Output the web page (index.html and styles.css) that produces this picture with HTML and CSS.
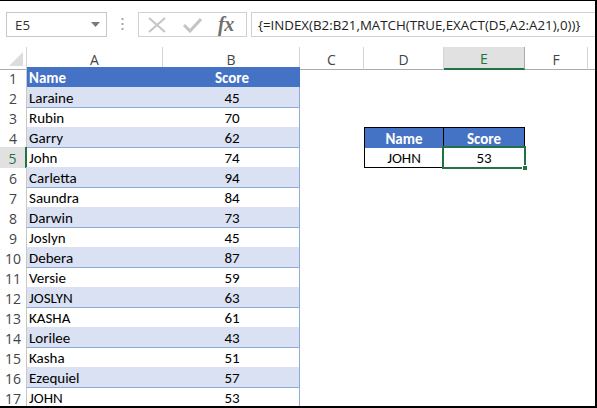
FILE: index.html
```html
<!DOCTYPE html>
<html>
<head>
<meta charset="utf-8">
<link rel="stylesheet" href="styles.css">
</head>
<body>
<div class="window">
  <div class="fbar">
    <div class="namebox"><span>E5</span>
      <svg class="arrow" width="9" height="5" viewBox="0 0 9 5"><path d="M0 0H9L4.5 5Z" fill="#7a7a7a"/></svg>
    </div>
    <div class="dots">
      <svg width="3" height="13" viewBox="0 0 3 13"><rect x="0.5" y="0" width="2" height="2" fill="#a6a6a6"/><rect x="0.5" y="5" width="2" height="2" fill="#a6a6a6"/><rect x="0.5" y="10" width="2" height="2" fill="#a6a6a6"/></svg>
    </div>
    <div class="fxbox">
      <svg class="ic-x" width="18" height="16" viewBox="0 0 18 16"><path d="M1 1L17 15M17 1L1 15" stroke="#c4c4c4" stroke-width="2" fill="none"/></svg>
      <svg class="ic-ok" width="19" height="16" viewBox="0 0 19 16"><path d="M1 8L7 14L18 2" stroke="#c4c4c4" stroke-width="3" fill="none"/></svg>
      <span class="fx">fx</span>
    </div>
    <div class="formula">{=INDEX(B2:B21,MATCH(TRUE,EXACT(D5,A2:A21),0))}</div>
  </div>

  <div class="sheet">
    <div class="row colhead">
      <div class="corner"><svg width="14" height="14" viewBox="0 0 14 14"><path d="M14 0V14H0Z" fill="#dcdcdc"/></svg></div>
      <div class="ch">A</div><div class="ch">B</div><div class="ch">C</div><div class="ch">D</div><div class="ch sel">E</div><div class="ch">F</div><div class="ch last"></div>
    </div>

    <div class="row"><div class="rh">1</div><div class="a th">Name</div><div class="b th">Score</div><div></div><div></div><div></div><div></div><div></div></div>
    <div class="row"><div class="rh">2</div><div class="a band">Laraine</div><div class="b band">45</div><div></div><div></div><div></div><div></div><div></div></div>
    <div class="row"><div class="rh">3</div><div class="a">Rubin</div><div class="b">70</div><div></div><div></div><div></div><div></div><div></div></div>
    <div class="row"><div class="rh">4</div><div class="a band">Garry</div><div class="b band">62</div><div></div><div class="lt lt-hd lt-l">Name</div><div class="lt lt-hd">Score</div><div></div><div></div></div>
    <div class="row"><div class="rh rsel">5</div><div class="a">John</div><div class="b">74</div><div></div><div class="lt lt-l lt-b">JOHN</div><div class="lt lt-b active">53<span class="selbox"><span class="handle"></span></span></div><div></div><div></div></div>
    <div class="row"><div class="rh">6</div><div class="a band">Carletta</div><div class="b band">94</div><div></div><div></div><div></div><div></div><div></div></div>
    <div class="row"><div class="rh">7</div><div class="a">Saundra</div><div class="b">84</div><div></div><div></div><div></div><div></div><div></div></div>
    <div class="row"><div class="rh">8</div><div class="a band">Darwin</div><div class="b band">73</div><div></div><div></div><div></div><div></div><div></div></div>
    <div class="row"><div class="rh">9</div><div class="a">Joslyn</div><div class="b">45</div><div></div><div></div><div></div><div></div><div></div></div>
    <div class="row"><div class="rh">10</div><div class="a band">Debera</div><div class="b band">87</div><div></div><div></div><div></div><div></div><div></div></div>
    <div class="row"><div class="rh">11</div><div class="a">Versie</div><div class="b">59</div><div></div><div></div><div></div><div></div><div></div></div>
    <div class="row"><div class="rh">12</div><div class="a band">JOSLYN</div><div class="b band">63</div><div></div><div></div><div></div><div></div><div></div></div>
    <div class="row"><div class="rh">13</div><div class="a">KASHA</div><div class="b">61</div><div></div><div></div><div></div><div></div><div></div></div>
    <div class="row"><div class="rh">14</div><div class="a band">Lorilee</div><div class="b band">43</div><div></div><div></div><div></div><div></div><div></div></div>
    <div class="row"><div class="rh">15</div><div class="a">Kasha</div><div class="b">51</div><div></div><div></div><div></div><div></div><div></div></div>
    <div class="row"><div class="rh">16</div><div class="a band">Ezequiel</div><div class="b band">57</div><div></div><div></div><div></div><div></div><div></div></div>
    <div class="row"><div class="rh">17</div><div class="a">JOHN</div><div class="b">53</div><div></div><div></div><div></div><div></div><div></div></div>
  </div>
</div>
</body>
</html>
```

FILE: styles.css
```css
* { box-sizing: border-box; }
html, body { margin: 0; padding: 0; background: #fff; }
.window {
  width: 597px;
  height: 408px;
  border-top: 1px solid #000;
  border-right: 2px solid #000;
  border-bottom: 2px solid #000;
  background: #fff;
  overflow: hidden;
}
.fbar {
  display: flex;
  align-items: flex-start;
  height: 46px;
  padding-top: 11px;
  font-family: "Open Sans", "Noto Sans", sans-serif;
  font-size: 13.3px;
  color: #222;
}
.namebox {
  margin-left: 6px;
  width: 101px;
  height: 25px;
  border: 1px solid #c6c6c6;
  display: flex;
  align-items: center;
  justify-content: space-between;
  padding: 0 6px 0 8px;
  color: #333;
}
.dots {
  width: 31px;
  height: 25px;
  display: flex;
  align-items: center;
  justify-content: center;
}
.fxbox {
  width: 109px;
  height: 25px;
  border: 1px solid #d0d0d0;
  display: flex;
  align-items: center;
  padding-left: 9px;
}
.ic-x { margin-right: 17px; }
.ic-ok { margin-right: 16px; }
.fx {
  font-family: "Liberation Serif", serif;
  font-style: italic;
  font-weight: bold;
  font-size: 20px;
  color: #6f6f6f;
  letter-spacing: -0.5px;
}
.formula {
  flex: 1;
  margin-left: 4px;
  height: 25px;
  border: 1px solid #d0d0d0;
  border-right: none;
  display: flex;
  align-items: center;
  padding-left: 6px;
  white-space: nowrap;
  overflow: hidden;
  color: #222;
}

.sheet { font-family: Carlito, Lato, sans-serif; font-size: 15px; color: #000; }
.row {
  display: grid;
  grid-template-columns: 27px 136px 137px 64px 80px 81px 63px 1fr;
  height: 20px;
}
.colhead {
  font-family: "Open Sans", "Noto Sans", sans-serif;
  font-size: 14px;
  color: #444;
}
.corner {
  border-right: 1px solid #d4d4d4;
  border-bottom: 1px solid #ababab;
  display: flex;
  align-items: flex-end;
  justify-content: flex-end;
  padding: 0 3px 3px 0;
}
.ch {
  border-right: 1px solid #d4d4d4;
  border-bottom: 1px solid #ababab;
  display: flex;
  align-items: center;
  justify-content: center;
  padding-top: 2px;
}
.ch.last { border-right: none; }
.ch.sel {
  background: #e1e1e1;
  color: #217346;
  border-bottom: 2px solid #217346;
  border-right-color: #ababab;
}
.rh {
  border-right: 1px solid #c8c8c8;
  display: flex;
  align-items: center;
  justify-content: center;
  font-family: "Open Sans", "Noto Sans", sans-serif;
  font-size: 14px;
  color: #444;
  padding-top: 2px;
}
.rh.rsel {
  background: #e1e1e1;
  color: #217346;
  border-right: 2px solid #217346;
}
.a, .b {
  border-bottom: 1px solid #8ea9db;
  display: flex;
  align-items: flex-end;
  line-height: 18px;
  padding-bottom: 0;
}
.a { padding-left: 2px; }
.b { justify-content: center; border-right: 1px solid #8ea9db; padding-left: 2px; }
.band { background: #d9e1f2; }
.th { background: #4472c4; color: #fff; font-weight: bold; }
.b.th { border-right-color: #4472c4; }

.lt {
  display: flex;
  align-items: flex-end;
  justify-content: center;
  line-height: 18px;
  padding-bottom: 0;
  border-top: 1px solid #000;
  border-right: 1px solid #000;
}
.lt-l { border-left: 1px solid #000; }
.lt-hd { background: #4472c4; color: #fff; font-weight: bold; }
.lt-b { border-top: none; border-bottom: 1px solid #000; }
.active { position: relative; }
.selbox {
  position: absolute;
  left: -2px;
  top: -1px;
  right: -2px;
  bottom: -2px;
  border: 2px solid #217346;
}
.handle {
  position: absolute;
  right: -4px;
  bottom: -4px;
  width: 6px;
  height: 6px;
  background: #217346;
  border: 1px solid #fff;
}
```
